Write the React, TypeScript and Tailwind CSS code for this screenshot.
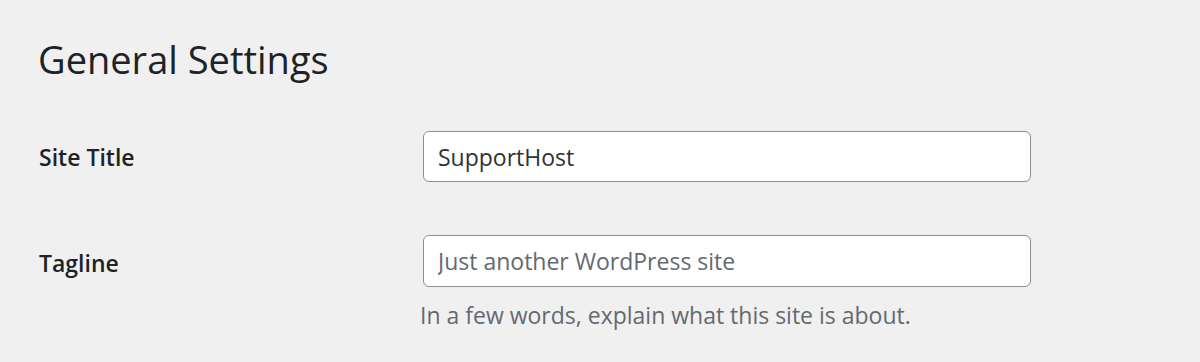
import React from "react";

export default function App() {
  return (
    <div
      className="w-[1200px] h-[362px] bg-[#f0f0f1] text-[#1d2327] pl-[39px] pt-[35px] overflow-hidden"
      style={{ fontFamily: '"Open Sans", "Noto Sans", sans-serif' }}
    >
      <h1 className="text-[38px] leading-[48px] font-normal m-0 -ml-[1px]">General Settings</h1>
      <div className="mt-[48px] flex items-center h-[51px]">
        <label className="w-[384px] text-[23px] font-semibold pt-[2px]">Site Title</label>
        <input
          readOnly
          value="SupportHost"
          className="w-[608px] h-[51px] bg-white border border-[#8c8f94] rounded-[6px] px-[14px] text-[23px] text-[#2c3338] outline-none"
        />
      </div>
      <div className="mt-[53px] flex items-center h-[52px]">
        <label className="w-[384px] text-[23px] font-semibold pt-[4px]">Tagline</label>
        <input
          readOnly
          placeholder="Just another WordPress site"
          className="w-[608px] h-[52px] bg-white border border-[#8c8f94] rounded-[6px] px-[14px] text-[23px] text-[#2c3338] placeholder:text-[#646970] outline-none"
        />
      </div>
      <p className="ml-[381px] mt-[12px] text-[23px] leading-[32px] text-[#646970]">
        In a few words, explain what this site is about.
      </p>
    </div>
  );
}
